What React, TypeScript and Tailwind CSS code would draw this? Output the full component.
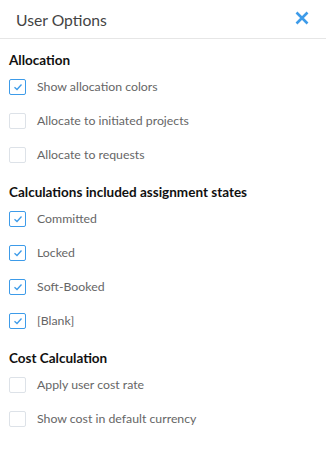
import React from "react";

const Box = ({ checked }: { checked: boolean }) => (
  <div
    className={`w-[17px] h-[16px] rounded-[2px] border flex items-center justify-center bg-white ${
      checked ? "border-[#3d9be9]" : "border-[#dde2e8]"
    }`}
  >
    {checked && (
      <svg width="10" height="8" viewBox="0 0 10 8">
        <path d="M1.5 4.2 L4 6.5 L8.5 1.5" fill="none" stroke="#3d9be9" strokeWidth="1.3" />
      </svg>
    )}
  </div>
);

const Row = ({ label, checked }: { label: string; checked: boolean }) => (
  <div className="h-[34px] flex items-center">
    <Box checked={checked} />
    <span className="ml-[11px] text-[12.3px] text-[#666]">{label}</span>
  </div>
);

const Heading = ({ children, first }: { children: React.ReactNode; first?: boolean }) => (
  <div className={`h-[20px] flex items-center text-[13.5px] font-bold text-[#111] ${first ? "" : "mt-[10px]"}`}>
    {children}
  </div>
);

export default function App() {
  return (
    <div className="w-[326px] h-[453px] bg-white" style={{ fontFamily: 'Lato, "Open Sans", sans-serif' }}>
      <div className="h-[39px] border-b border-[#e6e6e6] flex items-center justify-between pl-[16px] pr-[17px] pt-[3px]">
        <span className="text-[15.7px] text-[#444]">User Options</span>
        <svg width="14" height="14" viewBox="0 0 14 14" className="-mt-[5px]">
          <path d="M1.5 1.5 L12.5 12.5 M12.5 1.5 L1.5 12.5" stroke="#3d9be9" strokeWidth="2.6" />
        </svg>
      </div>
      <div className="px-[9px] pt-[11px]">
        <Heading first>Allocation</Heading>
        <Row label="Show allocation colors" checked />
        <Row label="Allocate to initiated projects" checked={false} />
        <Row label="Allocate to requests" checked={false} />
        <Heading>Calculations included assignment states</Heading>
        <Row label="Committed" checked />
        <Row label="Locked" checked />
        <Row label="Soft-Booked" checked />
        <Row label="[Blank]" checked />
        <Heading>Cost Calculation</Heading>
        <Row label="Apply user cost rate" checked={false} />
        <Row label="Show cost in default currency" checked={false} />
      </div>
    </div>
  );
}
